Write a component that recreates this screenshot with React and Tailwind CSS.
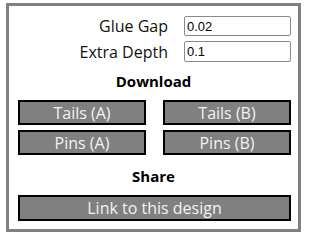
import React from 'react';

const btn =
  'h-[25px] border-2 border-black bg-[#808080] text-[#f2f2f2] text-[16px] leading-none flex items-center justify-center';

const App = () => {
  return (
    <div className="pt-[3px] pl-[6px] bg-white min-h-screen" style={{ fontFamily: '"Open Sans", "DejaVu Sans", sans-serif' }}>
      <div className="w-[295px] border-[3px] border-[#808080] pt-[10px] pb-[8px]">
        <div className="grid grid-cols-[159px_107px] gap-x-4 gap-y-[5px] items-center">
          <label className="text-right text-[16px] leading-none text-[#111]">Glue Gap</label>
          <input
            defaultValue="0.02"
            className="h-[20px] border border-[#8a8a8a] rounded-[2px] px-[2px] text-[13px] text-black"
            style={{ fontFamily: '"Liberation Sans", Arial, sans-serif' }}
          />
          <label className="text-right text-[16px] leading-none text-[#111]">Extra Depth</label>
          <input
            defaultValue="0.1"
            className="h-[21px] border border-[#8a8a8a] rounded-[2px] px-[2px] text-[13px] text-black"
            style={{ fontFamily: '"Liberation Sans", Arial, sans-serif' }}
          />
        </div>

        <h3 className="text-center font-bold text-[15px] leading-none text-black mt-[12px]">Download</h3>
        <div className="grid grid-cols-[128px_128px] gap-x-[17px] gap-y-[5px] px-[9px] mt-[11px]">
          <button className={btn}>Tails (A)</button>
          <button className={btn}>Tails (B)</button>
          <button className={btn}>Pins (A)</button>
          <button className={btn}>Pins (B)</button>
        </div>

        <h3 className="text-center font-bold text-[15px] leading-none text-black mt-[14px]">Share</h3>
        <div className="px-[9px] mt-[11px]">
          <button className={`${btn} w-[273px] h-[26px]`}>Link to this design</button>
        </div>
      </div>
    </div>
  );
};

export default App;
